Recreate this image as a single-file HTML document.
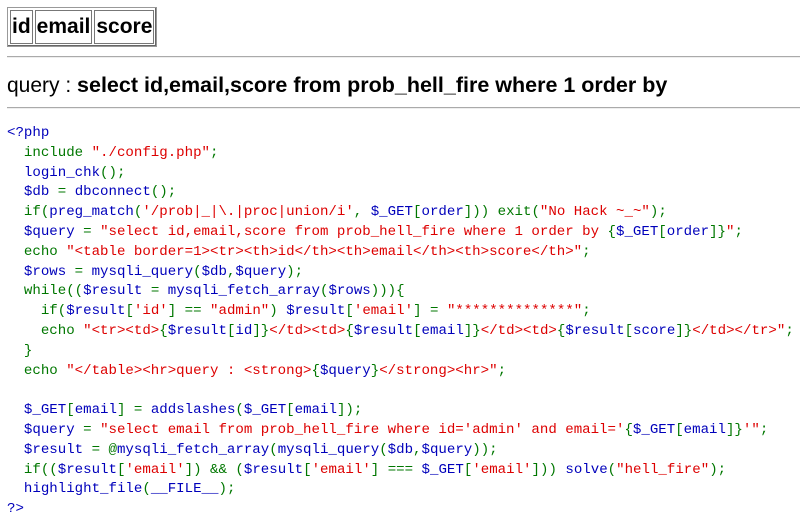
<!DOCTYPE html>
<html><head><meta charset="utf-8">
<style>
html,body{margin:0;padding:0;background:#fff;width:800px;height:521px;overflow:hidden}
body{font-family:"Liberation Sans","Noto Sans CJK KR",sans-serif;color:#000}
table{position:absolute;left:7px;top:7px;border:1px solid #999;border-collapse:separate;border-spacing:2px;box-shadow:inset -1px -1px 0 #666}
th{border:1px solid #777;font-size:21px;font-weight:bold;padding:2px 1px;line-height:28px}
.hr{position:absolute;left:7px;width:793px;height:0;border-top:1px solid #aaa;border-bottom:1px solid #eee}
.q{position:absolute;left:7px;top:71px;font-size:21px;line-height:28px;white-space:nowrap}
.q strong{font-size:21.5px}
pre{position:absolute;left:7px;top:124px;margin:0;font-family:"Liberation Mono",monospace;font-size:14.1px;line-height:19.8px;color:#0000BB}
.g{color:#007700}.b{color:#0000BB}.r{color:#DD0000}
</style></head><body>
<table><tr><th>id</th><th>email</th><th>score</th></tr></table>
<div class="hr" style="top:56px"></div>
<div class="q">query : <strong>select id,email,score from prob_hell_fire where 1 order by </strong></div>
<div class="hr" style="top:107px"></div>
<pre><span class="b">&lt;?php</span>
  <span class="g">include </span><span class="r">"./config.php"</span><span class="g">;</span>
  <span class="b">login_chk</span><span class="g">();</span>
  <span class="b">$db </span><span class="g">= </span><span class="b">dbconnect</span><span class="g">();</span>
  <span class="g">if(</span><span class="b">preg_match</span><span class="g">(</span><span class="r">'/prob|_|\.|proc|union/i'</span><span class="g">, </span><span class="b">$_GET</span><span class="g">[</span><span class="b">order</span><span class="g">])) exit(</span><span class="r">"No Hack ~_~"</span><span class="g">);</span>
  <span class="b">$query </span><span class="g">= </span><span class="r">"select id,email,score from prob_hell_fire where 1 order by </span><span class="g">{</span><span class="b">$_GET</span><span class="g">[</span><span class="b">order</span><span class="g">]}</span><span class="r">"</span><span class="g">;</span>
  <span class="g">echo </span><span class="r">"&lt;table border=1&gt;&lt;tr&gt;&lt;th&gt;id&lt;/th&gt;&lt;th&gt;email&lt;/th&gt;&lt;th&gt;score&lt;/th&gt;"</span><span class="g">;</span>
  <span class="b">$rows </span><span class="g">= </span><span class="b">mysqli_query</span><span class="g">(</span><span class="b">$db</span><span class="g">,</span><span class="b">$query</span><span class="g">);</span>
  <span class="g">while((</span><span class="b">$result </span><span class="g">= </span><span class="b">mysqli_fetch_array</span><span class="g">(</span><span class="b">$rows</span><span class="g">))){</span>
    <span class="g">if(</span><span class="b">$result</span><span class="g">[</span><span class="r">'id'</span><span class="g">] == </span><span class="r">"admin"</span><span class="g">) </span><span class="b">$result</span><span class="g">[</span><span class="r">'email'</span><span class="g">] = </span><span class="r">"**************"</span><span class="g">;</span>
    <span class="g">echo </span><span class="r">"&lt;tr&gt;&lt;td&gt;</span><span class="g">{</span><span class="b">$result</span><span class="g">[</span><span class="b">id</span><span class="g">]}</span><span class="r">&lt;/td&gt;&lt;td&gt;</span><span class="g">{</span><span class="b">$result</span><span class="g">[</span><span class="b">email</span><span class="g">]}</span><span class="r">&lt;/td&gt;&lt;td&gt;</span><span class="g">{</span><span class="b">$result</span><span class="g">[</span><span class="b">score</span><span class="g">]}</span><span class="r">&lt;/td&gt;&lt;/tr&gt;"</span><span class="g">;</span>
  <span class="g">}</span>
  <span class="g">echo </span><span class="r">"&lt;/table&gt;&lt;hr&gt;query : &lt;strong&gt;</span><span class="g">{</span><span class="b">$query</span><span class="g">}</span><span class="r">&lt;/strong&gt;&lt;hr&gt;"</span><span class="g">;</span>

  <span class="b">$_GET</span><span class="g">[</span><span class="b">email</span><span class="g">] = </span><span class="b">addslashes</span><span class="g">(</span><span class="b">$_GET</span><span class="g">[</span><span class="b">email</span><span class="g">]);</span>
  <span class="b">$query </span><span class="g">= </span><span class="r">"select email from prob_hell_fire where id='admin' and email='</span><span class="g">{</span><span class="b">$_GET</span><span class="g">[</span><span class="b">email</span><span class="g">]}</span><span class="r">'"</span><span class="g">;</span>
  <span class="b">$result </span><span class="g">= @</span><span class="b">mysqli_fetch_array</span><span class="g">(</span><span class="b">mysqli_query</span><span class="g">(</span><span class="b">$db</span><span class="g">,</span><span class="b">$query</span><span class="g">));</span>
  <span class="g">if((</span><span class="b">$result</span><span class="g">[</span><span class="r">'email'</span><span class="g">]) &amp;&amp; (</span><span class="b">$result</span><span class="g">[</span><span class="r">'email'</span><span class="g">] === </span><span class="b">$_GET</span><span class="g">[</span><span class="r">'email'</span><span class="g">])) </span><span class="b">solve</span><span class="g">(</span><span class="r">"hell_fire"</span><span class="g">);</span>
  <span class="b">highlight_file</span><span class="g">(</span><span class="b">__FILE__</span><span class="g">);</span>
<span class="b">?&gt;</span></pre>
</body></html>
